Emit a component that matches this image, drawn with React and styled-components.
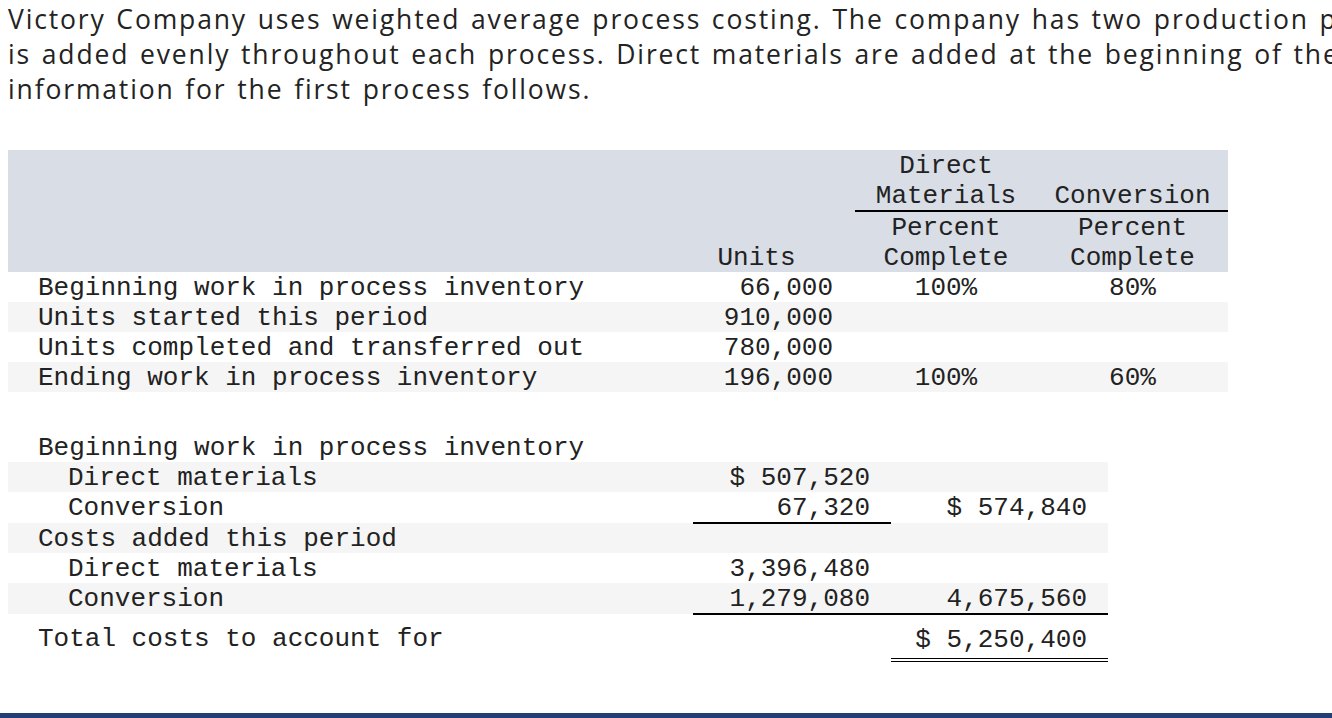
import React from "react";
import styled, { createGlobalStyle } from "styled-components";

const Global = createGlobalStyle`
  html, body { margin: 0; padding: 0; background: #fff; }
  body { overflow: hidden; width: 1332px; height: 718px; }
  * { box-sizing: border-box; }
`;

const Page = styled.div`
  position: relative;
  width: 1332px;
  height: 718px;
  overflow: hidden;
  padding-left: 8px;
  display: flex;
  flex-direction: column;
`;

const Intro = styled.p`
  margin: 0;
  padding-top: 2px;
  font-family: "Open Sans", Lato, sans-serif;
  font-size: 26.5px;
  line-height: 35px;
  letter-spacing: 1.85px;
  word-spacing: 2px;
  color: #232323;
  white-space: nowrap;
`;

const Line = styled.span`
  display: block;
`;

const Table = styled.table`
  border-collapse: collapse;
  table-layout: fixed;
  width: ${(p) => p.$width}px;
  margin-top: ${(p) => p.$top}px;
  font-family: "Liberation Mono", "Courier New", monospace;
  font-size: 26px;
  color: #222;
`;

const HeadRow = styled.tr`
  background: #d8dde6;
`;

const Row = styled.tr`
  background: ${(p) => (p.$shade ? "#f5f5f5" : "#fff")};
`;

const Cell = styled.td`
  height: 30px;
  padding: 3px 0 0 0;
  line-height: 27px;
  white-space: nowrap;
  vertical-align: top;
  text-align: ${(p) => p.$align || "left"};
  padding-left: ${(p) => p.$indent || 0}px;
  padding-right: ${(p) => p.$pr || 0}px;
  border-bottom: ${(p) =>
    p.$rule === "single"
      ? "2px solid #000"
      : p.$rule === "double"
      ? "4px double #000"
      : "none"};
`;

const TotalCell = styled(Cell)`
  height: 46px;
  padding-top: 12px;
`;

const BottomBar = styled.div`
  position: absolute;
  left: 0;
  right: 0;
  bottom: 0;
  height: 5px;
  background: #213f75;
`;

const unitRows = [
  { label: "Beginning work in process inventory", units: "66,000", dm: "100%", cv: "80%" },
  { label: "Units started this period", units: "910,000" },
  { label: "Units completed and transferred out", units: "780,000" },
  { label: "Ending work in process inventory", units: "196,000", dm: "100%", cv: "60%" },
];

const costRows = [
  { label: "Beginning work in process inventory", indent: 30 },
  { label: "Direct materials", indent: 60, a: "$ 507,520" },
  { label: "Conversion", indent: 60, a: "67,320", b: "$ 574,840", ruleA: "single" },
  { label: "Costs added this period", indent: 30 },
  { label: "Direct materials", indent: 60, a: "3,396,480" },
  { label: "Conversion", indent: 60, a: "1,279,080", b: "4,675,560", ruleA: "single", ruleB: "single" },
];

export default function App() {
  return (
    <Page>
      <Global />
      <Intro>
        <Line>
          Victory Company uses weighted average process costing. The company has two production processes. Conversion cost
        </Line>
        <Line>
          is added evenly throughout each process. Direct materials are added at the beginning of the first process. Additional
        </Line>
        <Line>information for the first process follows.</Line>
      </Intro>

      <Table $width={1220} $top={43}>
        <colgroup>
          <col style={{ width: 672 }} />
          <col style={{ width: 175 }} />
          <col style={{ width: 182 }} />
          <col style={{ width: 191 }} />
        </colgroup>
        <thead>
          <HeadRow>
            <Cell />
            <Cell />
            <Cell $align="center">Direct</Cell>
            <Cell />
          </HeadRow>
          <HeadRow>
            <Cell />
            <Cell />
            <Cell $align="center" $rule="single">Materials</Cell>
            <Cell $align="center" $rule="single">Conversion</Cell>
          </HeadRow>
          <HeadRow>
            <Cell />
            <Cell />
            <Cell $align="center">Percent</Cell>
            <Cell $align="center">Percent</Cell>
          </HeadRow>
          <HeadRow>
            <Cell />
            <Cell $align="center" $pr={22}>Units</Cell>
            <Cell $align="center">Complete</Cell>
            <Cell $align="center">Complete</Cell>
          </HeadRow>
        </thead>
        <tbody>
          {unitRows.map((r, i) => (
            <Row key={i} $shade={i % 2 === 1}>
              <Cell $indent={30}>{r.label}</Cell>
              <Cell $align="right" $pr={22}>{r.units}</Cell>
              <Cell $align="center">{r.dm || ""}</Cell>
              <Cell $align="center">{r.cv || ""}</Cell>
            </Row>
          ))}
        </tbody>
      </Table>

      <Table $width={1100} $top={40}>
        <colgroup>
          <col style={{ width: 685 }} />
          <col style={{ width: 198 }} />
          <col style={{ width: 217 }} />
        </colgroup>
        <tbody>
          {costRows.map((r, i) => (
            <Row key={i} $shade={i % 2 === 1}>
              <Cell $indent={r.indent}>{r.label}</Cell>
              <Cell $align="right" $pr={21} $rule={r.ruleA}>{r.a || ""}</Cell>
              <Cell $align="right" $pr={21} $rule={r.ruleB}>{r.b || ""}</Cell>
            </Row>
          ))}
          <Row>
            <TotalCell $indent={30}>Total costs to account for</TotalCell>
            <TotalCell />
            <TotalCell $align="right" $pr={21} $rule="double">$ 5,250,400</TotalCell>
          </Row>
        </tbody>
      </Table>

      <BottomBar />
    </Page>
  );
}
